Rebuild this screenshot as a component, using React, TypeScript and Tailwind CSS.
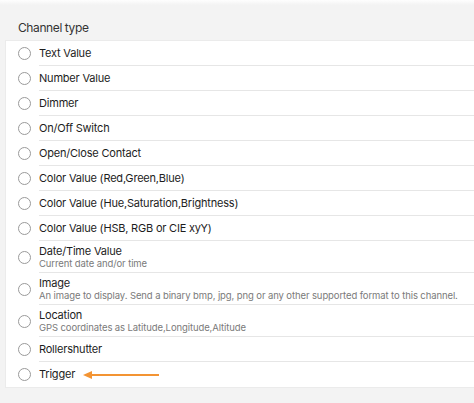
import React from "react";

type Item = { title: string; desc?: string; arrow?: boolean };

const items: Item[] = [
  { title: "Text Value" },
  { title: "Number Value" },
  { title: "Dimmer" },
  { title: "On/Off Switch" },
  { title: "Open/Close Contact" },
  { title: "Color Value (Red,Green,Blue)" },
  { title: "Color Value (Hue,Saturation,Brightness)" },
  { title: "Color Value (HSB, RGB or CIE xyY)" },
  { title: "Date/Time Value", desc: "Current date and/or time" },
  {
    title: "Image",
    desc: "An image to display. Send a binary bmp, jpg, png or any other supported format to this channel.",
  },
  { title: "Location", desc: "GPS coordinates as Latitude,Longitude,Altitude" },
  { title: "Rollershutter" },
  { title: "Trigger", arrow: true },
];

function Row({ item, last }: { item: Item; last: boolean }) {
  return (
    <div className="flex items-stretch">
      <div className="flex items-center pl-[12px] pr-[8px]">
        <div className="w-[13px] h-[13px] rounded-full border border-[#9a9a9a] bg-white" />
      </div>
      <div
        className={
          "flex-1 flex flex-col justify-center " +
          (last ? "" : "border-b border-[#e6e6e6] ") +
          (item.desc ? "h-[32px]" : "h-[25px]")
        }
      >
        <div className="flex items-center">
          <span className="text-[11px] leading-[13px] tracking-[-0.2px] text-[#1d1d1d]">{item.title}</span>
          {item.arrow && (
            <svg width="78" height="10" viewBox="0 0 78 10" className="ml-[8px]">
              <polygon points="0,5 9,1 9,9" fill="#f39433" />
              <rect x="8" y="4" width="68" height="2" fill="#f39433" />
            </svg>
          )}
        </div>
        {item.desc && (
          <div className="text-[9.5px] leading-[11px] tracking-[-0.1px] text-[#7a7a7a] whitespace-nowrap">
            {item.desc}
          </div>
        )}
      </div>
    </div>
  );
}

export default function App() {
  return (
    <div
      className="w-[474px] h-[403px] bg-[#f3f3f3] relative overflow-hidden"
      style={{ fontFamily: "Inter, 'Noto Sans', sans-serif" }}
    >
      <div className="absolute top-0 left-0 right-0 h-[5px] bg-gradient-to-b from-[#fefefe] to-[#f3f3f3]" />
      <div className="h-[40px] flex items-end pb-[5px] pl-[18px]">
        <span className="text-[12px] leading-[14px] tracking-[-0.4px] text-[#333333]">Channel type</span>
      </div>
      <div className="ml-[5px] bg-white border-l border-t border-b border-[#ebebeb]">
        {items.map((it, i) => (
          <Row key={it.title} item={it} last={i === items.length - 1} />
        ))}
      </div>
    </div>
  );
}
